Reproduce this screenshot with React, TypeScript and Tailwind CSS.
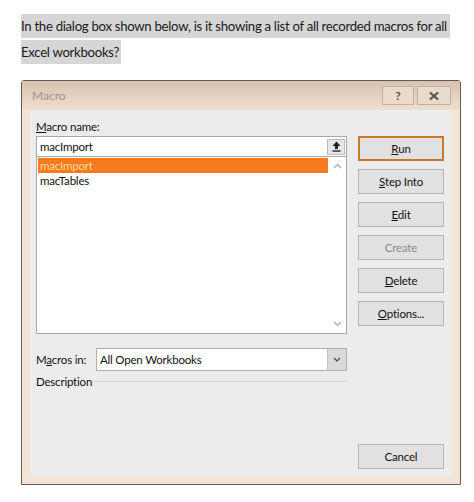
import React from 'react';

const UI = "font-['Lato','Open_Sans',sans-serif]";

function Btn({ children, primary, disabled }: { children: React.ReactNode; primary?: boolean; disabled?: boolean }) {
  return (
    <div
      className={`h-[25px] w-[86px] flex items-center justify-center text-[11.5px] tracking-[-0.2px] bg-[#e1e1e1] ${
        primary ? 'border-2 border-[#c8782e]' : 'border border-[#b4b4b4]'
      } ${disabled ? 'text-[#8a8a8a]' : 'text-[#111]'}`}
    >
      {children}
    </div>
  );
}

function Chevron({ up }: { up?: boolean }) {
  return (
    <svg width="9" height="6" viewBox="0 0 9 6" className="block">
      <path d={up ? 'M1 5 L4.5 1.5 L8 5' : 'M1 1 L4.5 4.5 L8 1'} fill="none" stroke="#a8a8a8" strokeWidth="1.2" />
    </svg>
  );
}

export default function App() {
  return (
    <div className="w-[474px] h-[502px] bg-white pt-[14px]">
      {/* question */}
      <div className="pl-[21px] font-['Lato',sans-serif] text-[13.2px] tracking-[-0.3px] leading-[25.5px] text-[#1a1a1a] whitespace-nowrap">
        <span className="bg-[#d6d6d6] py-[4px] pr-[3px]">
          In the dialog box shown below, is it showing a list of all recorded macros for all
        </span>
        <br />
        <span className="bg-[#d6d6d6] py-[4px] pr-[2px]">Excel workbooks?</span>
      </div>

      {/* dialog */}
      <div className={`ml-[21px] mt-[15px] w-[440px] h-[405px] border border-[#5e5a58] rounded-t-[3px] bg-[#f3e4d6] flex flex-col px-[8px] pb-[8px] ${UI}`}>
        <div className="h-[29px] flex items-center justify-between bg-gradient-to-b from-[#d9c2ae] to-[#eedfd1] -mx-[8px] pl-[10px] pr-[9px]">
          <span className="text-[12px] text-[#a0948c]">Macro</span>
          <div className="flex gap-[3px]">
            <div className="w-[32px] h-[19px] border border-[#c4b09e] bg-[#eadacb] flex items-center justify-center text-[12px] font-bold text-[#555] leading-none">
              ?
            </div>
            <div className="w-[34px] h-[19px] border border-[#c4b09e] bg-[#eadacb] flex items-center justify-center">
              <svg width="12" height="10" viewBox="0 0 12 10">
                <path d="M2 1.5 L10 8.5 M10 1.5 L2 8.5" stroke="#555" strokeWidth="2.2" fill="none" />
              </svg>
            </div>
          </div>
        </div>

        <div className="flex-1 bg-[#ececec] flex pl-[6px] pr-[8px] pb-[7px] text-[11.5px] tracking-[-0.2px]">
          {/* left column */}
          <div className="w-[312px] flex flex-col pt-[9px]">
            <div className="leading-[16px] text-[#111] mb-[1px]">
              <span className="underline">M</span>acro name:
            </div>
            <div className="h-[21px] border border-[#a8a8a8] bg-white flex items-center pl-[3px] pr-[1px]">
              <span className="flex-1 text-[#111]">macImport</span>
              <div className="w-[18px] h-[16px] bg-[#e6e6e6] border border-[#bcbcbc] flex items-center justify-center">
                <svg width="9" height="11" viewBox="0 0 9 11">
                  <path d="M4.5 0.5 L8.5 5 L6 5 L6 8 L3 8 L3 5 L0.5 5 Z" fill="#222" />
                  <path d="M0.5 10 H8.5" stroke="#222" strokeWidth="1.4" />
                </svg>
              </div>
            </div>
            <div className="h-[177px] border border-[#a8a8a8] border-t-0 bg-white flex">
              <div className="flex-1 pt-[1px] pl-[1px]">
                <div className="h-[15px] leading-[15px] bg-[#f47b20] text-[#fdd98e] pl-[2px]">macImport</div>
                <div className="h-[15px] leading-[15px] text-[#111] pl-[2px]">macTables</div>
              </div>
              <div className="w-[18px] flex flex-col items-center justify-between py-[6px]">
                <Chevron up />
                <Chevron />
              </div>
            </div>

            <div className="flex items-center mt-[14px]">
              <div className="w-[60px] text-[#111]">
                M<span className="underline">a</span>cros in:
              </div>
              <div className="flex-1 h-[23px] border border-[#b0b0b0] bg-white flex items-center pl-[3px]">
                <span className="flex-1 text-[#111]">All Open Workbooks</span>
                <div className="w-[19px] h-full bg-[#dadada] border-l border-[#c2c2c2] flex items-center justify-center">
                  <svg width="8" height="5" viewBox="0 0 8 5">
                    <path d="M1 1 L4 4 L7 1" fill="none" stroke="#444" strokeWidth="1.2" />
                  </svg>
                </div>
              </div>
            </div>

            <div className="flex items-center mt-[3px]">
              <span className="text-[#111] leading-[16px]">Description</span>
              <div className="flex-1 h-px bg-[#d6d6d6] ml-[2px] mb-[1px]" />
            </div>
          </div>

          {/* right column */}
          <div className="ml-[11px] flex flex-col pt-[26px] gap-[8px]">
            <Btn primary>
              <span className="underline">R</span>un
            </Btn>
            <Btn>
              <span className="underline">S</span>tep Into
            </Btn>
            <Btn>
              <span className="underline">E</span>dit
            </Btn>
            <Btn disabled>Create</Btn>
            <Btn>
              <span className="underline">D</span>elete
            </Btn>
            <Btn>
              <span className="underline">O</span>ptions...
            </Btn>
            <div className="flex-1" />
            <Btn>Cancel</Btn>
          </div>
        </div>
      </div>
    </div>
  );
}
